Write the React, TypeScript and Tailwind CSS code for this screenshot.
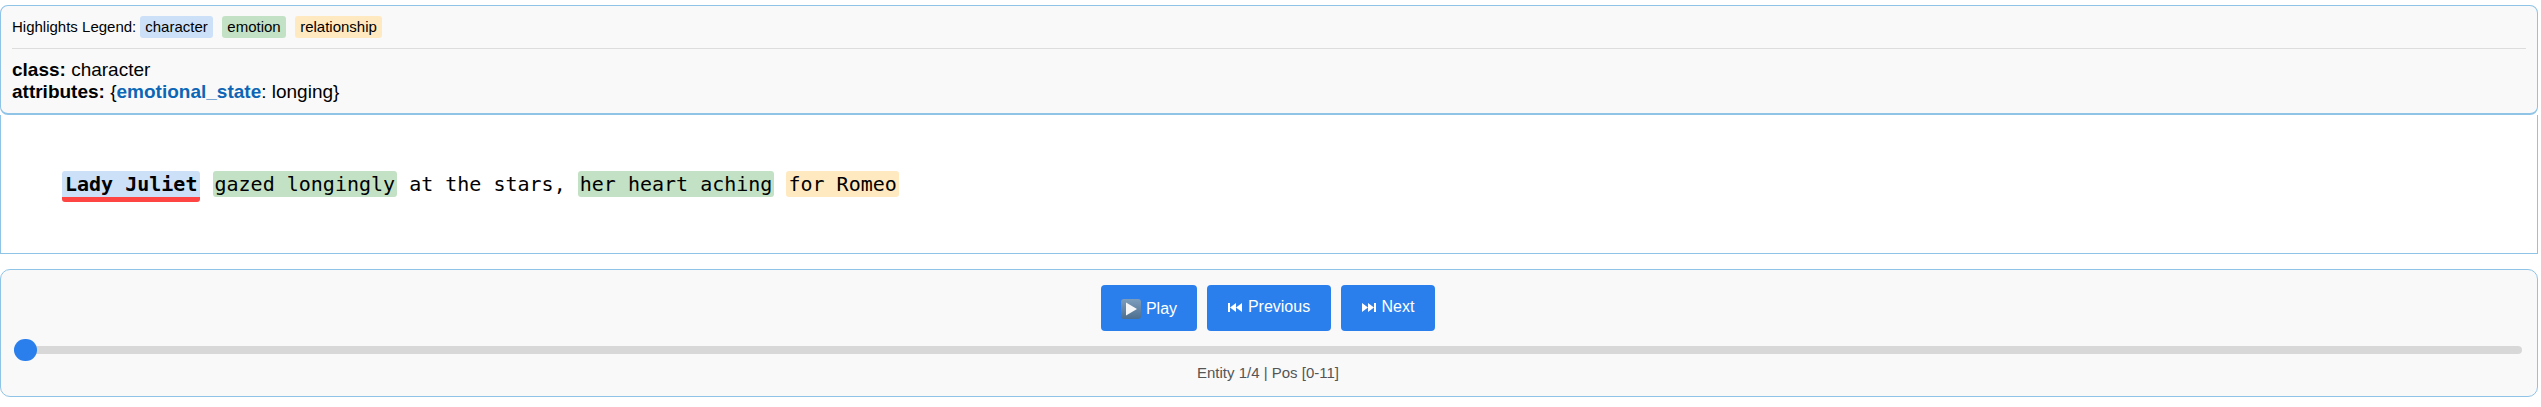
const sans = 'font-["Liberation_Sans",Arial,sans-serif]'

function SkipIcon({ flip }: { flip?: boolean }) {
  return (
    <svg width="14" height="9" viewBox="0 0 14 9" fill="white" className={flip ? 'rotate-180' : ''}>
      <path d="M0 0L6 4.5L0 9Z" />
      <path d="M6 0L12 4.5L6 9Z" />
      <rect x="12" y="0" width="2" height="9" />
    </svg>
  )
}

function PlayIcon() {
  return (
    <svg width="20" height="20" viewBox="0 0 20 20">
      <defs>
        <linearGradient id="playBg" x1="0" y1="0" x2="0" y2="1">
          <stop offset="0" stopColor="#7d9dbd" />
          <stop offset="1" stopColor="#4d6f8f" />
        </linearGradient>
      </defs>
      <rect width="20" height="20" rx="3" fill="url(#playBg)" />
      <path d="M5 3.5L16 10L5 16.5Z" fill="#f4f6f8" />
    </svg>
  )
}

function Tag({ color, children }: { color: string; children: string }) {
  return <span className={`rounded-[3px] px-[5px] ${color}`}>{children}</span>
}

export default function App() {
  return (
    <div className={`${sans} h-[407px] w-[2541px] overflow-hidden bg-white pt-[5px] pr-[3px] text-black`}>
      {/* Legend and selected entity */}
      <div className="h-[110px] rounded-[8px] border border-b-2 border-[#8fc4e6] bg-[#f9f9fa] px-[11px] pt-[10px]">
        <div className="flex h-[33px] items-start gap-[9.5px] border-b border-[#dddddd] text-[15px] leading-[22px]">
          <span className="mr-[-5.5px]">Highlights Legend:</span>
          <Tag color="bg-[#cce0f8]">character</Tag>
          <Tag color="bg-[#c3e2c5]">emotion</Tag>
          <Tag color="bg-[#ffe9c0]">relationship</Tag>
        </div>
        <div className="pt-[10px] text-[19px] leading-[22px]">
          <div>
            <b>class:</b> character
          </div>
          <div>
            <b>attributes:</b> {'{'}
            <b className="text-[#0d66b5]">emotional_state</b>: longing{'}'}
          </div>
        </div>
      </div>

      {/* Text with highlights */}
      <div className="flex h-[139px] items-start border border-t-0 border-[#8fc4e6] bg-white pt-[56px] pl-[61px] font-['DejaVu_Sans_Mono',monospace] text-[20px] leading-[26px] whitespace-pre">
        <span className="rounded-[3px] border-b-[5px] border-[#ff4444] bg-[#cce0f8] px-[3px] font-bold">Lady Juliet</span>
        <span> </span>
        <span className="rounded-[3px] bg-[#c3e2c5] px-[2px]">gazed longingly</span>
        <span> at the stars, </span>
        <span className="rounded-[3px] bg-[#c3e2c5] px-[2px]">her heart aching</span>
        <span> </span>
        <span className="rounded-[3px] bg-[#ffe9c0] px-[2px]">for Romeo</span>
      </div>

      {/* Playback controls */}
      <div className="mt-[15px] h-[128px] rounded-[10px] border border-[#8fc4e6] bg-[#f9f9fa] pt-[15px] pr-[15px] pl-[13px]">
        <div className="flex justify-center gap-[10px] text-[16px] text-white">
          <button className="flex h-[46px] w-[96px] items-center justify-center gap-[5px] rounded-[4px] bg-[#2a7fec] pt-[2px]">
            <PlayIcon />
            <span>Play</span>
          </button>
          <button className="flex h-[46px] w-[124px] items-center justify-center gap-[6px] rounded-[4px] bg-[#2a7fec] pb-[2px]">
            <SkipIcon flip />
            Previous
          </button>
          <button className="flex h-[46px] w-[94px] items-center justify-center gap-[6px] rounded-[4px] bg-[#2a7fec] pb-[2px]">
            <SkipIcon />
            Next
          </button>
        </div>
        <div className="relative mt-[15px] h-[8px] rounded-full bg-[#d8d8d8]">
          <div className="absolute top-[-7px] left-0 h-[22px] w-[23px] rounded-full bg-[#2a7fec]" />
        </div>
        <div className="mt-[9px] text-center text-[15px] leading-[20px] text-[#555555]">Entity 1/4 | Pos [0-11]</div>
      </div>
    </div>
  )
}
